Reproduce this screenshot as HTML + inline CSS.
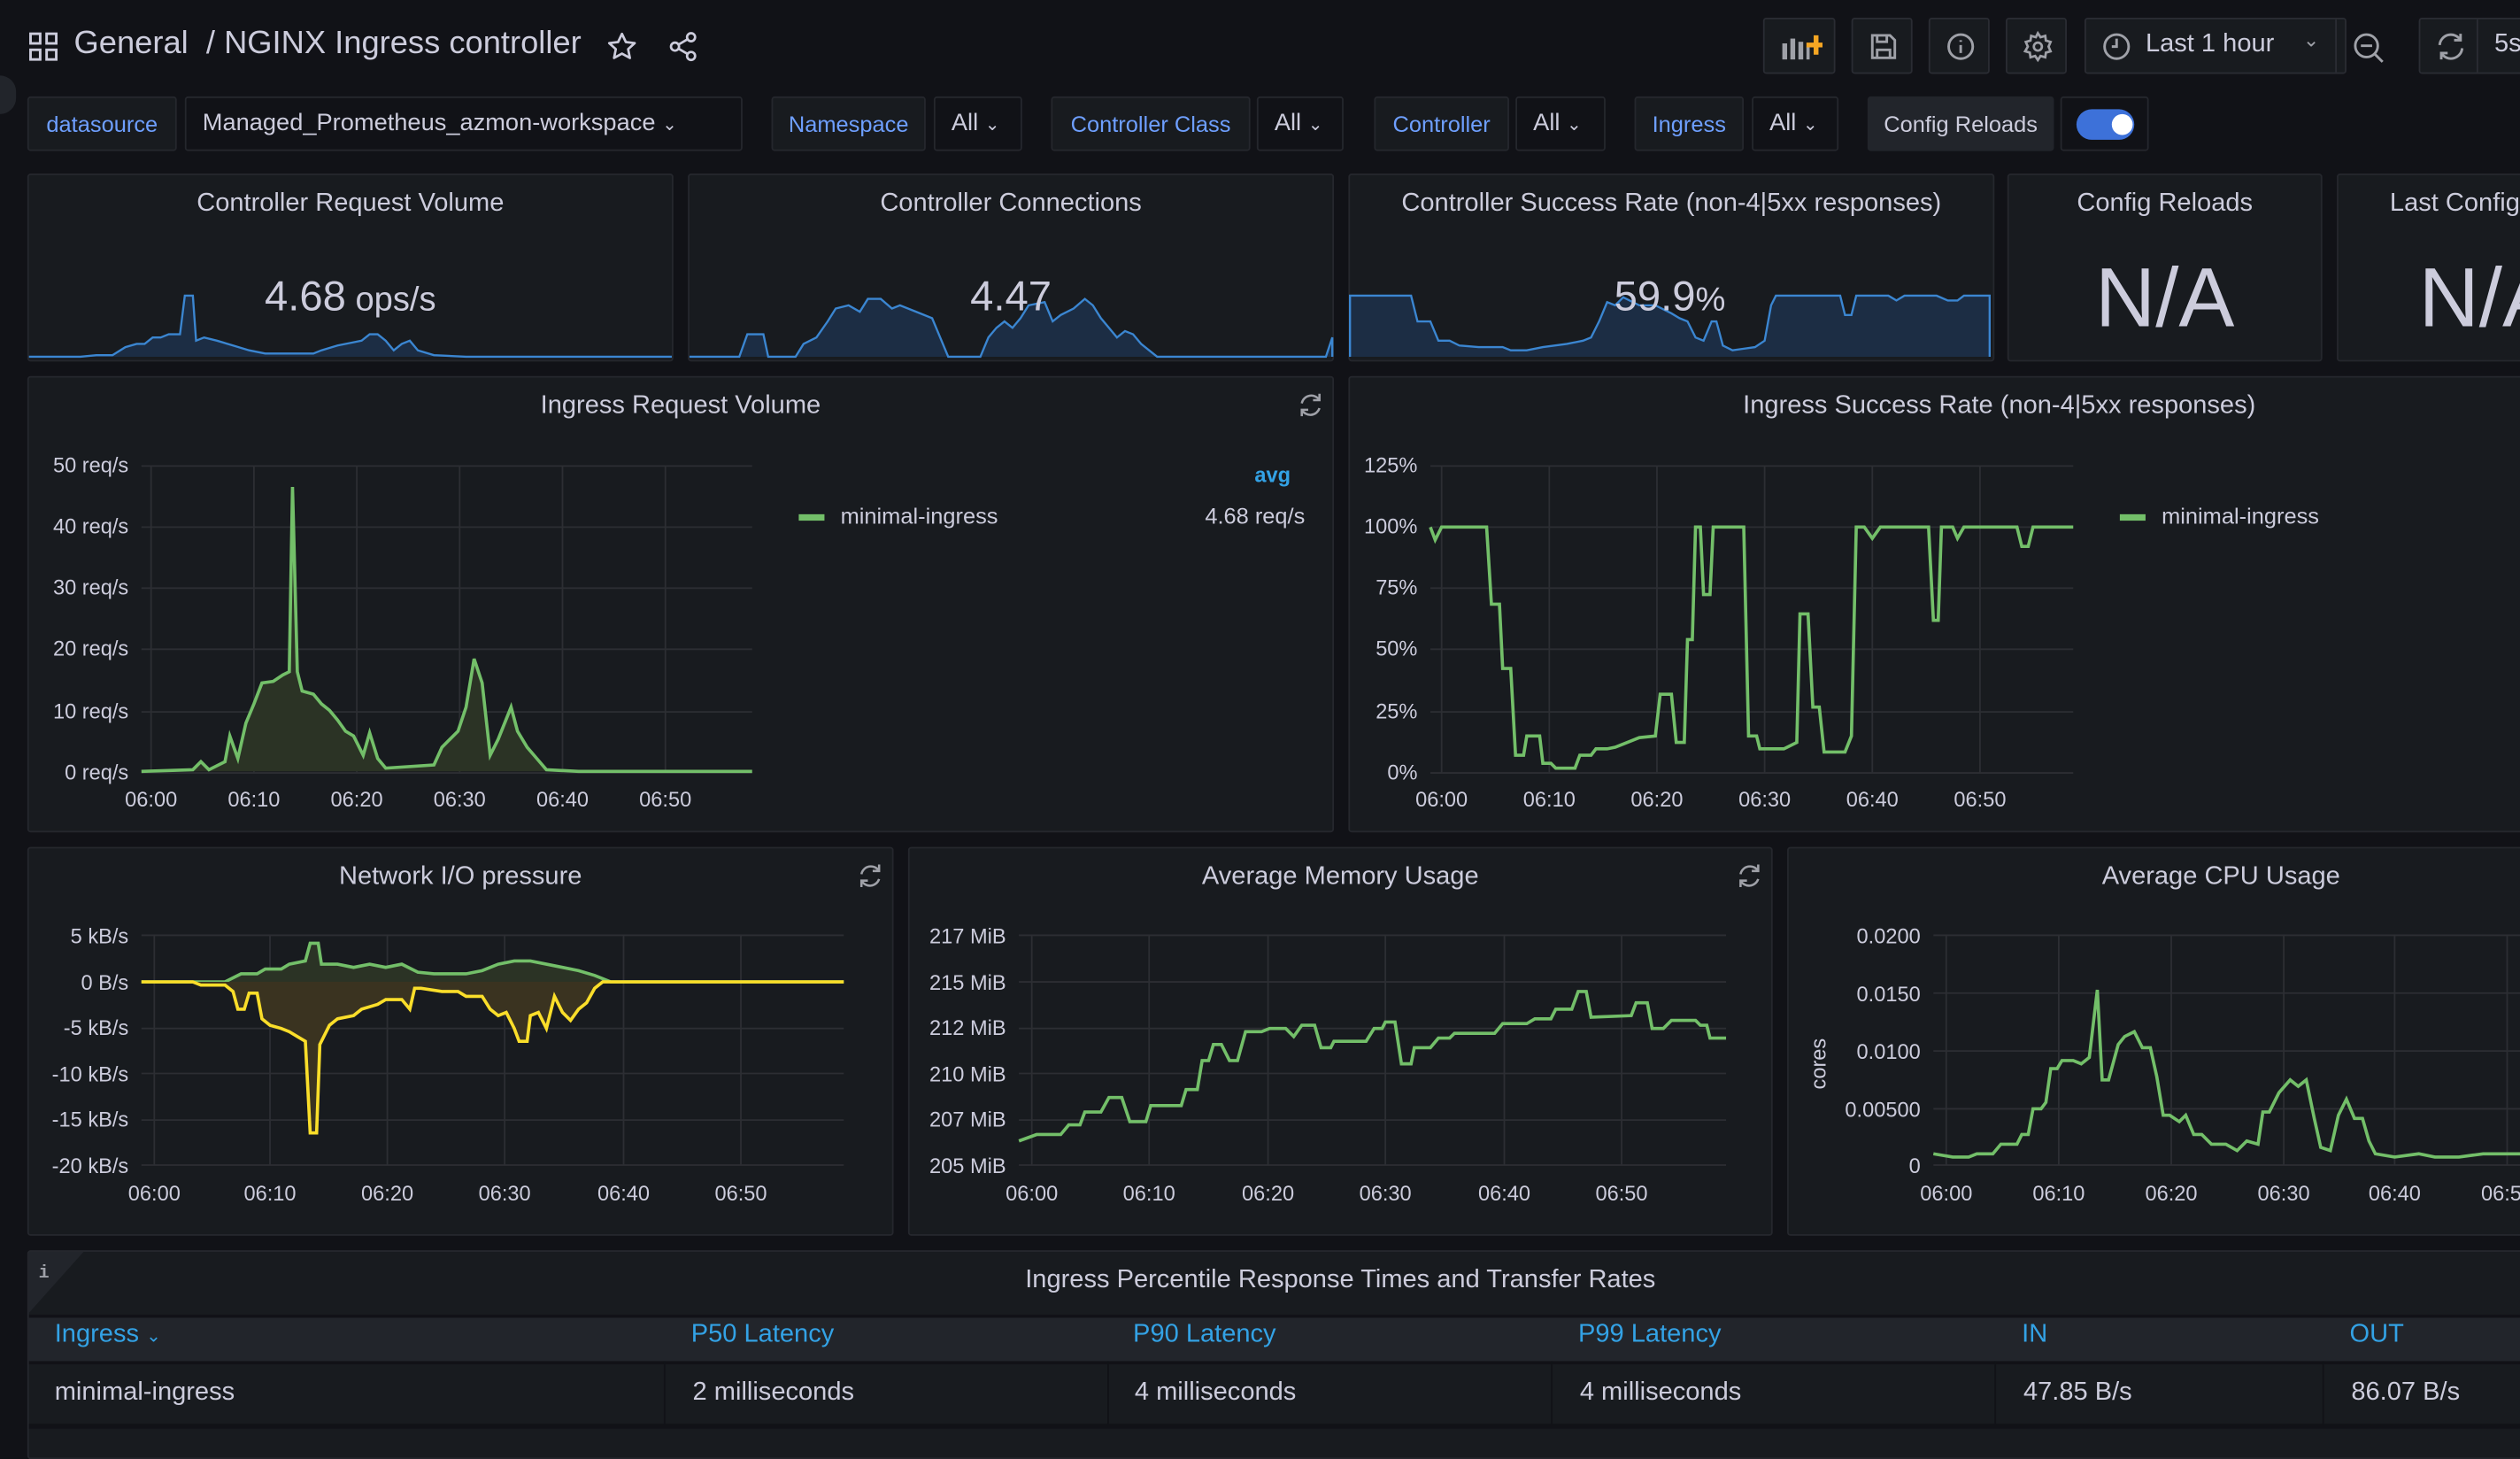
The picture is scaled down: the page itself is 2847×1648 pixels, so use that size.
<!DOCTYPE html>
<html><head><meta charset="utf-8"><style>
html,body{margin:0;padding:0;background:#111217;overflow:hidden}
#w{position:absolute;left:0;top:0;width:1568px;height:898px;transform:scale(1.81569,1.81514);transform-origin:0 0;font-family:"Liberation Sans",sans-serif;color:#ccccdc}
.a{position:absolute}
.p{position:absolute;background:#181b1f;border:1px solid #25272d;border-radius:2px;box-sizing:border-box}
.t{position:absolute;left:0;right:0;text-align:center;font-size:16px;color:#ccccdc;top:9px;white-space:nowrap}
.btn{position:absolute;top:11px;height:35px;border:1px solid #2a2c33;border-radius:2px;background:#181b1f;box-sizing:border-box}
.v{position:absolute;top:60px;height:34px;box-sizing:border-box;border:1px solid #25272d;border-radius:2px;font-size:14px;line-height:32px;white-space:nowrap}
.lb{background:#181b1f;color:#6e9fff;text-align:center}
.sel{background:#111217;color:#ccccdc;padding-left:10px;font-size:15px}
.ax{font-size:13px;fill:#ccccdc;font-family:"Liberation Sans",sans-serif}
.g line{stroke:#2c2e33;stroke-width:1}
.th{position:absolute;color:#33a2e5;font-size:16px;top:822px}
.td{position:absolute;color:#ccccdc;font-size:16px;top:858px}
</style></head><body><div id="w">
<svg class="a" style="left:18px;top:20px" width="18" height="18" viewBox="0 0 18 18" fill="none" stroke="#ccccdc" stroke-width="1.6"><rect x="1" y="1" width="6" height="6"/><rect x="11" y="1" width="6" height="6"/><rect x="1" y="11" width="6" height="6"/><rect x="11" y="11" width="6" height="6"/></svg>
<div class="a" style="left:46px;top:16px;font-size:20px;color:#ccccdc">General &nbsp;/ NGINX Ingress controller</div>
<svg class="a" style="left:377px;top:19px" width="20" height="20" viewBox="0 0 24 24" fill="none" stroke="#ccccdc" stroke-width="1.8" stroke-linejoin="round"><path d="M12 2.5l2.9 6.1 6.6.8-4.9 4.5 1.3 6.6L12 17.2l-5.9 3.3 1.3-6.6-4.9-4.5 6.6-.8z"/></svg>
<svg class="a" style="left:415px;top:19px" width="20" height="20" viewBox="0 0 24 24" fill="none" stroke="#ccccdc" stroke-width="1.8"><circle cx="18" cy="5" r="3"/><circle cx="6" cy="12" r="3"/><circle cx="18" cy="19" r="3"/><path d="M8.6 10.5l6.8-4M8.6 13.5l6.8 4"/></svg>
<div class="a" style="left:0;top:47px;width:10px;height:24px;border-radius:0 12px 12px 0;background:#22252b"></div>
<div class="btn" style="left:1097px;width:45px"><svg class="a" style="left:10px;top:8px" width="26" height="18"><rect x="1" y="7" width="3" height="10" fill="#9fa1a8"/><rect x="6" y="4" width="3" height="13" fill="#9fa1a8"/><rect x="11" y="6" width="3" height="11" fill="#9fa1a8"/><rect x="16" y="9" width="2" height="8" fill="#9fa1a8"/><path d="M22 2v12M16 8h12" stroke="#f5a623" stroke-width="3"/></svg></div>
<div class="btn" style="left:1152px;width:38px"><svg class="a" style="left:10px;top:8px" width="18" height="18" viewBox="0 0 18 18" fill="none" stroke="#9fa1a8" stroke-width="1.6"><path d="M2 2h11l3 3v11H2z"/><path d="M5 2v4h6V2M5 16v-5h8v5"/></svg></div>
<div class="btn" style="left:1200px;width:38px"><svg class="a" style="left:10px;top:8px" width="18" height="18" viewBox="0 0 18 18" fill="none" stroke="#9fa1a8" stroke-width="1.6"><circle cx="9" cy="9" r="7.5"/><path d="M9 8v5M9 5v1"/></svg></div>
<div class="btn" style="left:1248px;width:38px"><svg class="a" style="left:9px;top:7px" width="20" height="20" viewBox="0 0 24 24" fill="none" stroke="#9fa1a8" stroke-width="1.8"><circle cx="12" cy="12" r="3"/><path d="M12 2l2 3 3.5-1 .5 3.5 3.5 1-1.5 3.5 1.5 3.5-3.5 1-.5 3.5-3.5-1-2 3-2-3-3.5 1-.5-3.5-3.5-1L4.5 12 3 8.5l3.5-1L7 4l3.5 1z"/></svg></div>
<div class="btn" style="left:1297px;width:163px"><svg class="a" style="left:10px;top:8px" width="18" height="18" viewBox="0 0 18 18" fill="none" stroke="#9fa1a8" stroke-width="1.6"><circle cx="9" cy="9" r="7.5"/><path d="M9 4v5h-3"/></svg><div class="a" style="left:37px;top:7px;font-size:16px;color:#ccccdc">Last 1 hour</div><div class="a" style="left:135px;top:6px;font-size:12px;color:#9fa1a8">⌄</div><div class="a" style="left:155px;top:0;width:1px;height:33px;background:#2a2c33"></div><svg class="a" style="left:166px;top:8px" width="20" height="20" viewBox="0 0 20 20" fill="none" stroke="#9fa1a8" stroke-width="1.6"><circle cx="8.5" cy="8.5" r="7"/><path d="M5 8.5h7M13.5 13.5l5 5"/></svg></div>
<div class="btn" style="left:1505px;width:70px"><svg class="a" style="left:9px;top:7px" width="20" height="20" viewBox="0 0 20 20" fill="none" stroke="#9fa1a8" stroke-width="1.6"><path d="M16 6A7 7 0 0 0 3 9M4 14a7 7 0 0 0 13-3M16 2v4h-4M4 18v-4h4"/></svg><div class="a" style="left:35px;top:0;width:1px;height:33px;background:#2a2c33"></div><div class="a" style="left:46px;top:7px;font-size:16px;color:#ccccdc">5s</div></div>
<div class="v lb" style="left:17px;width:93px">datasource</div>
<div class="v sel" style="left:115px;width:347px">Managed_Prometheus_azmon-workspace <span style="font-size:11px">⌄</span></div>
<div class="v lb" style="left:480px;width:96px">Namespace</div>
<div class="v sel" style="left:581px;width:55px">All <span style="font-size:11px">⌄</span></div>
<div class="v lb" style="left:654px;width:124px">Controller Class</div>
<div class="v sel" style="left:782px;width:54px">All <span style="font-size:11px">⌄</span></div>
<div class="v lb" style="left:855px;width:84px">Controller</div>
<div class="v sel" style="left:943px;width:56px">All <span style="font-size:11px">⌄</span></div>
<div class="v lb" style="left:1017px;width:68px">Ingress</div>
<div class="v sel" style="left:1090px;width:54px">All <span style="font-size:11px">⌄</span></div>
<div class="v" style="left:1162px;width:116px;background:#22252b;color:#ccccdc;text-align:center;border-color:#22252b">Config Reloads</div>
<div class="v" style="left:1282px;width:55px;background:#111217"><div class="a" style="left:9px;top:7px;width:36px;height:19px;border-radius:10px;background:#3d71d9"></div><div class="a" style="left:31px;top:10px;width:13px;height:13px;border-radius:7px;background:#fff"></div></div>
<div class="p" style="left:17px;top:108px;width:402px;height:117px"><div class="t">Controller Request Volume</div></div>
<div class="p" style="left:428px;top:108px;width:402px;height:117px"><div class="t">Controller Connections</div></div>
<div class="p" style="left:839px;top:108px;width:402px;height:117px"><div class="t">Controller Success Rate (non-4|5xx responses)</div></div>
<div class="p" style="left:1249px;top:108px;width:196px;height:117px"><div class="t">Config Reloads</div></div>
<div class="p" style="left:1454px;top:108px;width:130px;height:117px"><div class="t" style="text-align:left;left:32px">Last Config</div></div>
<svg class="a" style="left:0;top:0" width="1568" height="230">
<g fill="#1c2d44" stroke="#3b86d1" stroke-width="1.3">
<polyline points="18,222 50,222 60,221 70,221 78,216 85,214 90,214 95,210 100,210 105,208 112,208 115,184 120,184 122,212 127,210 135,212 145,215 155,218 165,220 175,220 195,220 200,218 210,215 220,213 225,212 230,208 235,208 240,212 245,218 250,214 255,212 260,218 270,221 290,222 418,222"/>
<polyline points="429,222 460,222 465,208 475,208 478,222 495,222 500,214 508,210 515,200 520,192 528,190 535,194 540,186 548,186 555,192 560,190 570,194 580,198 585,210 590,222 610,222 615,210 620,204 625,200 630,204 635,198 640,190 650,188 655,200 660,196 668,192 675,186 680,190 685,198 690,204 695,210 700,206 705,208 710,214 715,218 720,222 825,222 829,210 829,222"/>
<polyline points="840,222 840,184 878,184 882,200 890,200 895,212 902,212 908,215 920,216 935,216 940,218 950,218 960,216 975,214 985,212 990,210 995,200 1000,188 1005,190 1010,185 1020,190 1030,190 1040,195 1045,198 1050,200 1055,210 1060,212 1065,200 1068,200 1072,215 1078,218 1085,217 1092,216 1098,212 1102,190 1105,184 1145,184 1148,196 1152,196 1155,184 1175,184 1180,187 1185,184 1205,184 1212,187 1218,187 1222,184 1238,184 1238,222"/>
</g>
<text x="218" y="193" text-anchor="middle" fill="#ccccdc" style="font:26px 'Liberation Sans',sans-serif">4.68<tspan font-size="21"> ops/s</tspan></text>
<text x="629" y="193" text-anchor="middle" fill="#ccccdc" style="font:26px 'Liberation Sans',sans-serif">4.47</text>
<text x="1039" y="193" text-anchor="middle" fill="#ccccdc" style="font:26px 'Liberation Sans',sans-serif">59.9<tspan font-size="21">%</tspan></text>
<text x="1347" y="203" text-anchor="middle" fill="#ccccdc" style="font:52px 'Liberation Sans',sans-serif">N/A</text>
<text x="1505" y="203" fill="#ccccdc" style="font:52px 'Liberation Sans',sans-serif">N/A</text>
</svg>
<div class="p" style="left:17px;top:234px;width:813px;height:284px"><div class="t">Ingress Request Volume</div></div>
<div class="p" style="left:839px;top:234px;width:745px;height:284px"><div class="t" style="left:0;right:-65px">Ingress Success Rate (non-4|5xx responses)</div></div>
<div class="p" style="left:17px;top:527px;width:539px;height:242px"><div class="t">Network I/O pressure</div></div>
<div class="p" style="left:565px;top:527px;width:538px;height:242px"><div class="t">Average Memory Usage</div></div>
<div class="p" style="left:1112px;top:527px;width:472px;height:242px"><div class="t" style="right:-68px">Average CPU Usage</div></div>
<div class="p" style="left:17px;top:778px;width:1567px;height:130px"><div class="t" style="left:0;right:auto;width:1632px">Ingress Percentile Response Times and Transfer Rates</div></div>
<svg class="a" style="left:18px;top:779px" width="34" height="40"><polygon points="0,0 34,0 0,38" fill="#22252b"/><text x="6" y="16" fill="#9fa1a8" style="font:bold 11px 'Liberation Mono',monospace">i</text></svg>
<div class="a" style="left:18px;top:818px;width:1566px;height:27px;background:#22252b;border-top:2px solid #111217;border-bottom:2px solid #111217"></div>
<div class="a" style="left:18px;top:886px;width:1566px;height:3px;background:#111217"></div>
<div class="a" style="left:413px;top:847px;width:1px;height:39px;background:#111217"></div>
<div class="a" style="left:689px;top:847px;width:1px;height:39px;background:#111217"></div>
<div class="a" style="left:965px;top:847px;width:1px;height:39px;background:#111217"></div>
<div class="a" style="left:1241px;top:847px;width:1px;height:39px;background:#111217"></div>
<div class="a" style="left:1445px;top:847px;width:1px;height:39px;background:#111217"></div>
<div class="th" style="left:34px">Ingress <span style="font-size:11px">⌄</span></div>
<div class="th" style="left:430px">P50 Latency</div>
<div class="th" style="left:705px">P90 Latency</div>
<div class="th" style="left:982px">P99 Latency</div>
<div class="th" style="left:1258px">IN</div>
<div class="th" style="left:1462px">OUT</div>
<div class="td" style="left:34px">minimal-ingress</div>
<div class="td" style="left:431px">2 milliseconds</div>
<div class="td" style="left:706px">4 milliseconds</div>
<div class="td" style="left:983px">4 milliseconds</div>
<div class="td" style="left:1259px">47.85 B/s</div>
<div class="td" style="left:1463px">86.07 B/s</div>
<svg class="a" style="left:0;top:0" width="1568" height="898">
<g fill="none" stroke="#9fa1a8" stroke-width="1.4">
<path d="M821 249a6 6 0 0 0-11 2M810 255a6 6 0 0 0 11-1M821 245v4h-4M810 259v-4h4"/>
<path d="M547 542a6 6 0 0 0-11 2M536 548a6 6 0 0 0 11-1M547 538v4h-4M536 552v-4h4"/>
<path d="M1094 542a6 6 0 0 0-11 2M1083 548a6 6 0 0 0 11-1M1094 538v4h-4M1083 552v-4h4"/>
</g>
<g class="g"><line x1="88" y1="290" x2="468" y2="290"/><line x1="88" y1="328" x2="468" y2="328"/><line x1="88" y1="366" x2="468" y2="366"/><line x1="88" y1="404" x2="468" y2="404"/><line x1="88" y1="443" x2="468" y2="443"/><line x1="88" y1="481" x2="468" y2="481"/>
<line x1="94" y1="290" x2="94" y2="481"/><line x1="158" y1="290" x2="158" y2="481"/><line x1="222" y1="290" x2="222" y2="481"/><line x1="286" y1="290" x2="286" y2="481"/><line x1="350" y1="290" x2="350" y2="481"/><line x1="414" y1="290" x2="414" y2="481"/></g>
<g class="ax" text-anchor="end"><text x="80" y="294">50 req/s</text><text x="80" y="332">40 req/s</text><text x="80" y="370">30 req/s</text><text x="80" y="408">20 req/s</text><text x="80" y="447">10 req/s</text><text x="80" y="485">0 req/s</text></g>
<g class="ax" text-anchor="middle"><text x="94" y="502">06:00</text><text x="158" y="502">06:10</text><text x="222" y="502">06:20</text><text x="286" y="502">06:30</text><text x="350" y="502">06:40</text><text x="414" y="502">06:50</text></g>
<polyline fill="#2b3325" stroke="#73bf69" stroke-width="2" points="88,480 120,479 125,474 130,479 140,474 143,458 148,472 153,450 158,438 163,425 170,424 176,420 180,418 182,303 185,418 188,430 195,432 200,438 205,442 210,448 215,455 220,458 226,470 230,456 235,472 240,478 270,476 275,465 280,460 285,455 290,440 295,410 300,425 305,470 310,460 318,440 322,455 328,465 334,472 340,479 360,480 468,480"/>
<rect x="497" y="320" width="16" height="4" fill="#73bf69"/>
<text class="ax" x="523" y="326" style="font-size:14px">minimal-ingress</text>
<text x="803" y="300" text-anchor="end" fill="#33a2e5" style="font:bold 13px 'Liberation Sans',sans-serif">avg</text>
<text class="ax" x="812" y="326" text-anchor="end" style="font-size:14px">4.68 req/s</text>
<g class="g"><line x1="890" y1="290" x2="1290" y2="290"/><line x1="890" y1="328" x2="1290" y2="328"/><line x1="890" y1="366" x2="1290" y2="366"/><line x1="890" y1="404" x2="1290" y2="404"/><line x1="890" y1="443" x2="1290" y2="443"/><line x1="890" y1="481" x2="1290" y2="481"/>
<line x1="897" y1="290" x2="897" y2="481"/><line x1="964" y1="290" x2="964" y2="481"/><line x1="1031" y1="290" x2="1031" y2="481"/><line x1="1098" y1="290" x2="1098" y2="481"/><line x1="1165" y1="290" x2="1165" y2="481"/><line x1="1232" y1="290" x2="1232" y2="481"/></g>
<g class="ax" text-anchor="end"><text x="882" y="294">125%</text><text x="882" y="332">100%</text><text x="882" y="370">75%</text><text x="882" y="408">50%</text><text x="882" y="447">25%</text><text x="882" y="485">0%</text></g>
<g class="ax" text-anchor="middle"><text x="897" y="502">06:00</text><text x="964" y="502">06:10</text><text x="1031" y="502">06:20</text><text x="1098" y="502">06:30</text><text x="1165" y="502">06:40</text><text x="1232" y="502">06:50</text></g>
<polyline fill="none" stroke="#73bf69" stroke-width="2" points="890,328 893,336 897,328 925,328 928,376 933,376 935,416 940,416 943,470 948,470 950,458 958,458 960,475 965,475 968,478 980,478 983,470 990,470 993,466 1000,466 1005,465 1010,463 1015,461 1020,459 1030,458 1033,432 1040,432 1043,462 1048,462 1050,398 1053,398 1055,328 1058,328 1060,370 1064,370 1066,328 1085,328 1088,458 1093,458 1095,466 1110,466 1118,462 1120,382 1125,382 1128,440 1132,440 1135,468 1148,468 1152,458 1155,328 1160,328 1165,335 1170,328 1200,328 1203,386 1206,386 1208,328 1215,328 1218,335 1222,328 1255,328 1258,340 1262,340 1265,328 1290,328"/>
<rect x="1319" y="320" width="16" height="4" fill="#73bf69"/>
<text class="ax" x="1345" y="326" style="font-size:14px">minimal-ingress</text>
<g class="g"><line x1="88" y1="582" x2="525" y2="582"/><line x1="88" y1="611" x2="525" y2="611"/><line x1="88" y1="640" x2="525" y2="640"/><line x1="88" y1="668" x2="525" y2="668"/><line x1="88" y1="697" x2="525" y2="697"/><line x1="88" y1="725" x2="525" y2="725"/>
<line x1="96" y1="582" x2="96" y2="725"/><line x1="168" y1="582" x2="168" y2="725"/><line x1="241" y1="582" x2="241" y2="725"/><line x1="314" y1="582" x2="314" y2="725"/><line x1="388" y1="582" x2="388" y2="725"/><line x1="461" y1="582" x2="461" y2="725"/></g>
<g class="ax" text-anchor="end"><text x="80" y="587">5 kB/s</text><text x="80" y="616">0 B/s</text><text x="80" y="644">-5 kB/s</text><text x="80" y="673">-10 kB/s</text><text x="80" y="701">-15 kB/s</text><text x="80" y="730">-20 kB/s</text></g>
<g class="ax" text-anchor="middle"><text x="96" y="747">06:00</text><text x="168" y="747">06:10</text><text x="241" y="747">06:20</text><text x="314" y="747">06:30</text><text x="388" y="747">06:40</text><text x="461" y="747">06:50</text></g>
<polyline fill="#2b3325" stroke="#73bf69" stroke-width="2" points="88,611 140,611 150,606 160,606 165,603 175,603 180,600 190,598 193,587 198,587 200,600 210,600 220,602 230,600 240,602 250,600 260,605 270,606 290,606 300,604 310,600 320,598 330,598 340,600 350,602 360,604 370,607 380,611 525,611"/>
<polyline fill="#3a3320" stroke="#fade2a" stroke-width="2" points="88,611 120,611 125,613 140,613 145,617 148,628 152,628 155,618 160,618 163,634 168,638 175,640 180,642 185,645 190,648 193,705 197,705 199,650 205,638 210,634 220,632 225,628 235,625 240,622 250,622 255,628 258,615 262,615 275,617 285,617 290,620 300,620 305,628 310,632 315,630 320,640 323,648 328,648 330,632 335,630 340,640 345,620 350,630 355,635 360,628 365,624 370,615 375,611 525,611"/>
<g class="g"><line x1="634" y1="582" x2="1074" y2="582"/><line x1="634" y1="611" x2="1074" y2="611"/><line x1="634" y1="640" x2="1074" y2="640"/><line x1="634" y1="668" x2="1074" y2="668"/><line x1="634" y1="697" x2="1074" y2="697"/><line x1="634" y1="725" x2="1074" y2="725"/>
<line x1="642" y1="582" x2="642" y2="725"/><line x1="715" y1="582" x2="715" y2="725"/><line x1="789" y1="582" x2="789" y2="725"/><line x1="862" y1="582" x2="862" y2="725"/><line x1="936" y1="582" x2="936" y2="725"/><line x1="1009" y1="582" x2="1009" y2="725"/></g>
<g class="ax" text-anchor="end"><text x="626" y="587">217 MiB</text><text x="626" y="616">215 MiB</text><text x="626" y="644">212 MiB</text><text x="626" y="673">210 MiB</text><text x="626" y="701">207 MiB</text><text x="626" y="730">205 MiB</text></g>
<g class="ax" text-anchor="middle"><text x="642" y="747">06:00</text><text x="715" y="747">06:10</text><text x="789" y="747">06:20</text><text x="862" y="747">06:30</text><text x="936" y="747">06:40</text><text x="1009" y="747">06:50</text></g>
<polyline fill="none" stroke="#73bf69" stroke-width="2" points="634,710 645,706 660,706 665,700 672,700 675,692 685,692 690,683 698,683 703,698 713,698 716,688 735,688 738,678 745,678 748,660 752,660 755,650 760,650 765,660 770,660 775,642 785,642 790,640 800,640 805,645 810,638 818,638 822,652 828,652 830,648 850,648 855,640 860,640 862,636 868,636 872,662 878,662 880,652 890,652 895,646 902,646 905,643 930,643 935,637 950,637 955,634 965,634 968,628 978,628 982,617 987,617 990,633 1015,632 1018,624 1025,624 1028,640 1035,640 1040,635 1055,635 1058,638 1062,638 1064,646 1074,646"/>
<g class="g"><line x1="1203" y1="582" x2="1568" y2="582"/><line x1="1203" y1="618" x2="1568" y2="618"/><line x1="1203" y1="654" x2="1568" y2="654"/><line x1="1203" y1="690" x2="1568" y2="690"/><line x1="1203" y1="725" x2="1568" y2="725"/>
<line x1="1211" y1="582" x2="1211" y2="725"/><line x1="1281" y1="582" x2="1281" y2="725"/><line x1="1351" y1="582" x2="1351" y2="725"/><line x1="1421" y1="582" x2="1421" y2="725"/><line x1="1490" y1="582" x2="1490" y2="725"/><line x1="1560" y1="582" x2="1560" y2="725"/></g>
<g class="ax" text-anchor="end"><text x="1195" y="587">0.0200</text><text x="1195" y="623">0.0150</text><text x="1195" y="659">0.0100</text><text x="1195" y="695">0.00500</text><text x="1195" y="730">0</text></g>
<text class="ax" transform="translate(1136,662) rotate(-90)" text-anchor="middle">cores</text>
<g class="ax" text-anchor="middle"><text x="1211" y="747">06:00</text><text x="1281" y="747">06:10</text><text x="1351" y="747">06:20</text><text x="1421" y="747">06:30</text><text x="1490" y="747">06:40</text><text x="1560" y="747">06:50</text></g>
<polyline fill="none" stroke="#73bf69" stroke-width="2" points="1203,718 1215,720 1225,720 1230,718 1240,718 1245,712 1255,712 1258,706 1262,706 1265,690 1270,690 1273,686 1276,665 1280,665 1283,660 1290,660 1295,662 1300,658 1305,616 1308,672 1312,672 1318,650 1322,645 1328,642 1333,652 1338,652 1342,670 1346,694 1350,694 1356,698 1360,694 1365,706 1370,706 1376,712 1385,712 1392,716 1398,710 1405,712 1408,692 1412,692 1418,680 1425,672 1430,676 1435,672 1440,696 1444,714 1450,716 1455,694 1460,684 1465,696 1470,696 1474,710 1478,718 1490,720 1505,718 1515,720 1530,720 1545,718 1568,718"/>
</svg>
</div></body></html>
